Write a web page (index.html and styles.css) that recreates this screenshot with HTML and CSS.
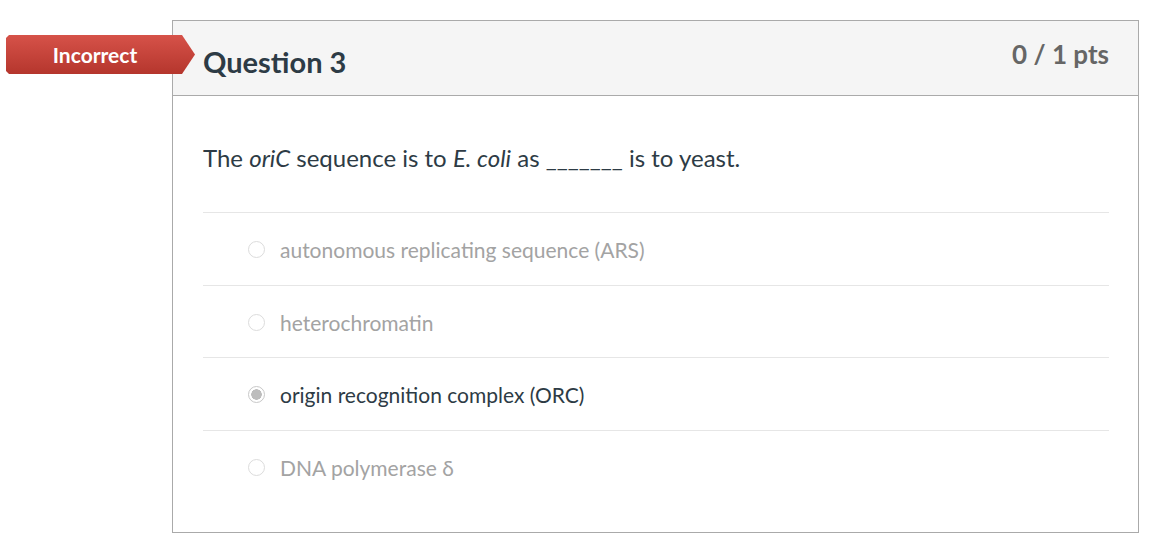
FILE: index.html
```html
<!DOCTYPE html>
<html>
<head>
<meta charset="utf-8">
<link rel="stylesheet" href="styles.css">
</head>
<body>
<div class="page">
  <div class="badge"><span>Incorrect</span></div>
  <div class="card">
    <div class="card-header">
      <h2 class="title">Question 3</h2>
      <div class="pts">0 / 1 pts</div>
    </div>
    <div class="card-body">
      <p class="question">The <i>oriC</i> sequence is to <i>E. coli</i> as _______ is to yeast.</p>
      <ul class="answers">
        <li class="answer"><span class="radio"></span><span>autonomous replicating sequence (ARS)</span></li>
        <li class="answer"><span class="radio"></span><span>heterochromatin</span></li>
        <li class="answer selected"><span class="radio"></span><span>origin recognition complex (ORC)</span></li>
        <li class="answer"><span class="radio"></span><span>DNA polymerase δ</span></li>
      </ul>
    </div>
  </div>
</div>
</body>
</html>
```
FILE: styles.css
```css
html, body {
  margin: 0;
  padding: 0;
  background: #fff;
  font-family: Lato, "Noto Sans", sans-serif;
}
.page {
  position: relative;
  padding: 20px 0 0 172px;
}
.badge {
  position: absolute;
  left: 6px;
  top: 35px;
  width: 189px;
  height: 39px;
  background: linear-gradient(#d65249, #b5362d);
  clip-path: polygon(3px 0, 176px 0, 189px 19.5px, 176px 39px, 3px 39px, 0 36px, 0 3px);
  display: flex;
  align-items: center;
  justify-content: center;
  padding-right: 11px;
  box-sizing: border-box;
  z-index: 2;
}
.badge span {
  color: #fff;
  font-weight: 700;
  font-size: 21px;
  line-height: 24px;
}
.card {
  width: 967px;
  height: 513px;
  box-sizing: border-box;
  border: 1px solid #aaaaaa;
}
.card-header {
  display: flex;
  justify-content: space-between;
  align-items: flex-start;
  height: 75px;
  box-sizing: border-box;
  background: #f5f5f5;
  border-bottom: 1px solid #aaaaaa;
  padding: 18px 29px 0 30px;
}
.title {
  margin: 5px 0 0;
  font-size: 29px;
  font-weight: 700;
  color: #2d3b45;
  line-height: 35px;
}
.pts {
  margin-top: 0;
  font-size: 26px;
  font-weight: 700;
  color: #666;
  line-height: 31px;
}
.card-body {
  padding: 0 29px 0 30px;
}
.question {
  margin: 0;
  padding: 48px 0 0;
  height: 117px;
  box-sizing: border-box;
  font-size: 24px;
  line-height: 28px;
  color: #2d3b45;
  border-bottom: 1px solid #e6e6e6;
}
.answers {
  list-style: none;
  margin: 0;
  padding: 0;
}
.answer {
  display: flex;
  align-items: center;
  gap: 15px;
  height: 72.5px;
  box-sizing: border-box;
  padding-left: 45px;
  padding-top: 2px;
  font-size: 21px;
  color: #a3a3a3;
  border-bottom: 1px solid #e6e6e6;
}
.answer:last-child {
  border-bottom: none;
}
.answer.selected {
  color: #2d3b45;
}
.radio {
  width: 17px;
  height: 17px;
  box-sizing: border-box;
  border-radius: 50%;
  border: 1px solid #dcdcdc;
  background: #fff;
  flex: none;
}
.selected .radio {
  border: 1px solid #c8c8c8;
  background: radial-gradient(circle, #bdbdbd 0 5px, #fff 5.5px);
}
```
